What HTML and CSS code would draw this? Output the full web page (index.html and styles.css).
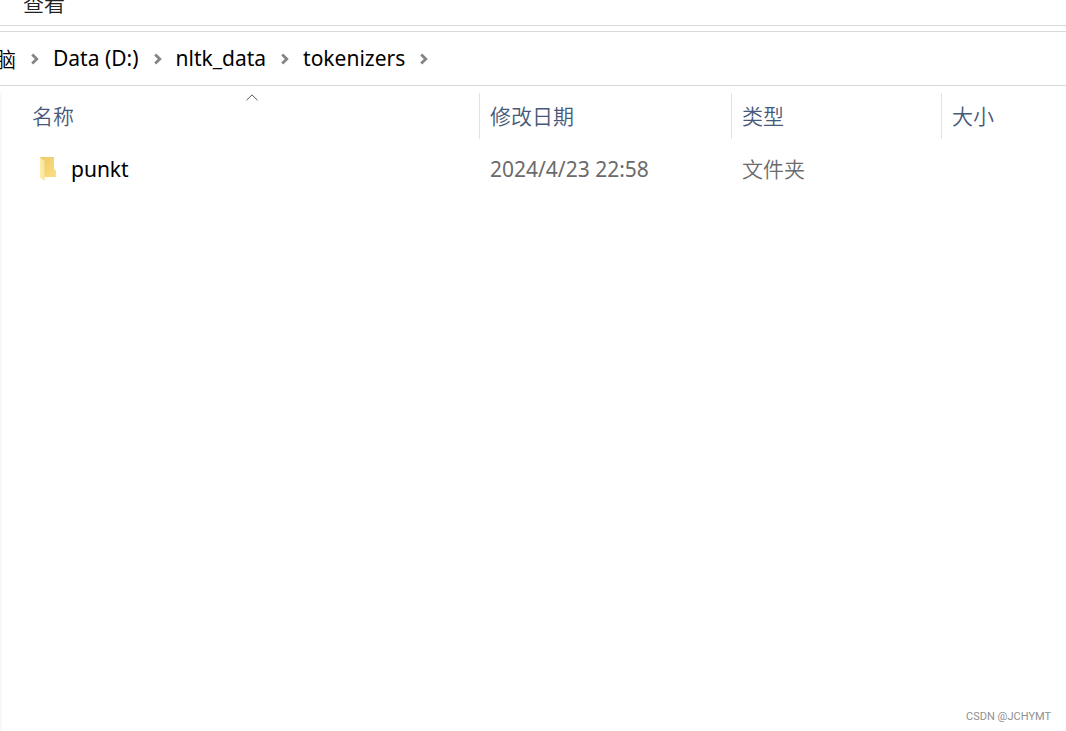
FILE: index.html
```html
<!DOCTYPE html>
<html lang="zh-CN">
<head>
<meta charset="utf-8">
<meta name="viewport" content="width=device-width, initial-scale=1">
<title>tokenizers</title>
<link rel="stylesheet" href="styles.css">
</head>
<body>
<div class="window">
  <div class="menu-bar"><button class="menu-tab" type="button">查看</button></div>
  <nav class="address-bar" aria-label="路径">
    <a class="crumb crumb-first" href="#">脑</a>
    <svg class="chevron" viewBox="0 0 8 12" aria-hidden="true"><path d="M1.2 1.4 5.8 6 1.2 10.6"/></svg>
    <a class="crumb" href="#">Data (D:)</a>
    <svg class="chevron" viewBox="0 0 8 12" aria-hidden="true"><path d="M1.2 1.4 5.8 6 1.2 10.6"/></svg>
    <a class="crumb" href="#">nltk_data</a>
    <svg class="chevron" viewBox="0 0 8 12" aria-hidden="true"><path d="M1.2 1.4 5.8 6 1.2 10.6"/></svg>
    <a class="crumb" href="#">tokenizers</a>
    <svg class="chevron" viewBox="0 0 8 12" aria-hidden="true"><path d="M1.2 1.4 5.8 6 1.2 10.6"/></svg>
  </nav>
  <main class="files">
    <table class="file-table">
      <colgroup><col class="col-name"><col class="col-date"><col class="col-type"><col></colgroup>
      <thead>
        <tr>
          <th class="name" scope="col" aria-sort="ascending">名称<svg class="sort" viewBox="0 0 12 7" aria-hidden="true"><path d="M.6 6.2 6 .9l5.4 5.3"/></svg></th>
          <th scope="col">修改日期</th>
          <th scope="col">类型</th>
          <th scope="col">大小</th>
        </tr>
      </thead>
      <tbody>
        <tr>
          <td class="name">
            <a class="file" href="#">
              <svg class="folder" viewBox="0 0 18 24" aria-hidden="true">
                <defs>
                  <linearGradient id="back" x1="0" y1="0" x2="1" y2="1"><stop offset="0" stop-color="#edc867"/><stop offset="1" stop-color="#fbdf82"/></linearGradient>
                  <linearGradient id="front" x1="0" y1="0" x2="1" y2="0"><stop offset="0" stop-color="#ffeeb0"/><stop offset="1" stop-color="#fbe296"/></linearGradient>
                </defs>
                <path fill="url(#back)" d="M1 0h14v12l2 2v6H5L1 2z"/>
                <path fill="url(#front)" d="M1 .5 5.5 4v16H6l-.5 4L1 20.5z"/>
              </svg>
              <span>punkt</span>
            </a>
          </td>
          <td class="date">2024/4/23 22:58</td>
          <td>文件夹</td>
          <td></td>
        </tr>
      </tbody>
    </table>
    <footer class="credit">CSDN @JCHYMT</footer>
  </main>
</div>
</body>
</html>
```
FILE: styles.css
```css
* { box-sizing: border-box; }
body {
  margin: 0;
  background: #fff;
  color: #000;
  font: 21px/30px "Noto Sans", "Noto Sans CJK SC", sans-serif;
}
.window {
  display: flex;
  flex-direction: column;
  min-height: 100vh;
  overflow: hidden;
}
.menu-bar {
  display: flex;
  align-items: flex-end;
  height: 26px;
  padding: 0 23px 8px;
  border-bottom: 1px solid #d9d9d9;
}
.menu-tab {
  padding: 0;
  border: 0;
  background: none;
  color: #222;
  font: 350 21px/30px "Noto Sans CJK SC", sans-serif;
}
.address-bar {
  display: flex;
  align-items: center;
  gap: 14px;
  height: 55px;
  margin-top: 5px;
  border-top: 1px solid #d9d9d9;
  border-bottom: 1px solid #d9d9d9;
}
.crumb {
  padding: 0 1px 2px 0;
  color: #000;
  text-decoration: none;
  white-space: nowrap;
}
.crumb-first {
  margin-left: -5px;
  font: 350 21px/30px "Noto Sans CJK SC", sans-serif;
}
.chevron {
  flex: none;
  width: 8px;
  height: 12px;
  fill: none;
  stroke: #858585;
  stroke-width: 2.8;
}
.files {
  display: flex;
  flex: 1;
  flex-direction: column;
  justify-content: space-between;
  margin-top: 7px;
  border-left: 2px solid #f7f7f7;
}
.file-table {
  width: 100%;
  table-layout: fixed;
  border-collapse: separate;
  border-spacing: 0;
  text-align: left;
}
.col-name { width: 478px; }
.col-date { width: 252px; }
.col-type { width: 210px; }
th {
  position: relative;
  height: 46px;
  padding: 0 10px 2px;
  border-right: 1px solid #e2e2e2;
  color: #47597a;
  font: 350 21px/30px "Noto Sans CJK SC", sans-serif;
}
th:last-child { border-right: 0; }
td {
  height: 62px;
  padding: 0 10px 2px;
  color: #6b6b6b;
  font-weight: 350;
}
.date { font-weight: 400; }
.name { padding-left: 30px; }
.sort {
  position: absolute;
  top: 1px;
  right: 221px;
  width: 12px;
  height: 7px;
  fill: none;
  stroke: #555;
  stroke-width: 1;
}
.file {
  display: flex;
  align-items: center;
  gap: 14px;
  padding-left: 7px;
  color: #000;
  font-weight: 400;
  text-decoration: none;
}
.folder {
  width: 18px;
  height: 24px;
}
.credit {
  padding: 0 15px 6px;
  color: #909090;
  font: 11px/16px Roboto, sans-serif;
  text-align: right;
}
```
